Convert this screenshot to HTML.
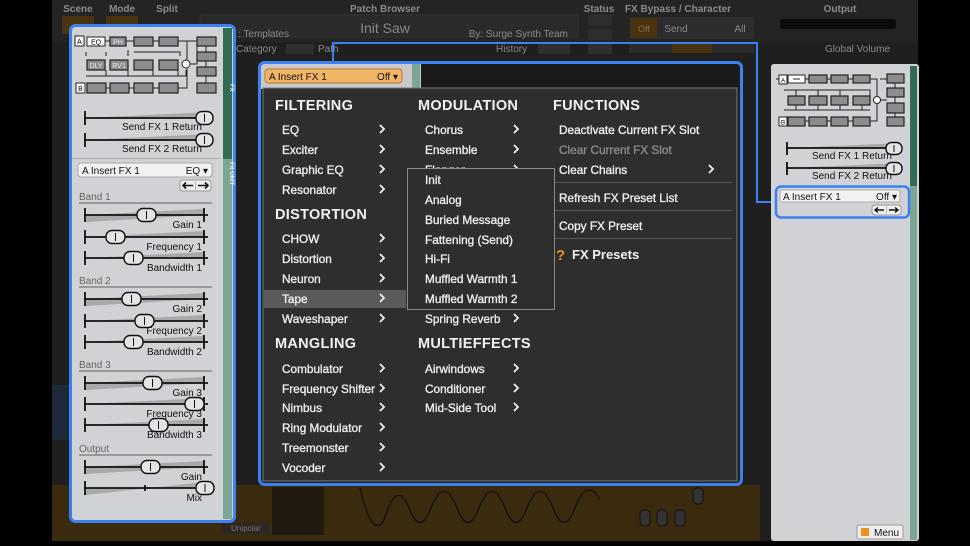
<!DOCTYPE html>
<html><head><meta charset="utf-8"><style>
html,body{margin:0;padding:0;background:#000;}
svg{display:block;font-family:"Liberation Sans",sans-serif;}
.m{fill:#ececec;font-size:11.8px;stroke:#ececec;stroke-width:0.35;}
.h{fill:#f2f2f2;font-size:14.5px;font-weight:bold;letter-spacing:0.3px;}
.l{fill:#111;font-size:10px;}
.b{fill:#666;font-size:10px;}
.d{fill:#8a8a8a;font-size:10px;}
.kn{fill:#e4e4e4;stroke:#111;stroke-width:1.4;}
.tr{stroke:#111;stroke-width:1.8;}
.wg{fill:#a9a9ab;}
.bx{fill:#8c8c8c;stroke:#222;stroke-width:1.2;}
.ch{fill:none;stroke:#eee;stroke-width:1.8;}
</style></head><body>
<svg width="970" height="546" viewBox="0 0 970 546" xmlns="http://www.w3.org/2000/svg">
<rect width="970" height="546" fill="#000"/>
<rect x="52" y="0" width="866" height="541" fill="#1f1f1f" rx="4"/>
<rect x="52" y="0" width="866" height="42" fill="#242424"/>
<text x="78" y="12" class="d" text-anchor="middle" font-weight="bold">Scene</text>
<text x="122" y="12" class="d" text-anchor="middle" font-weight="bold">Mode</text>
<text x="167" y="12" class="d" text-anchor="middle" font-weight="bold">Split</text>
<rect x="62" y="16" width="32" height="18" fill="#4a3410"/>
<rect x="106" y="16" width="32" height="10" fill="#4a3410"/>
<text x="385" y="12" class="d" text-anchor="middle" font-weight="bold">Patch Browser</text>
<rect x="200" y="15" width="378" height="22" fill="#2a2a2a" stroke="#333"/>
<text x="385" y="33" fill="#888" font-size="14" text-anchor="middle">Init Saw</text>
<text x="238" y="37" class="d">: Templates</text>
<text x="568" y="37" class="d" text-anchor="end">By: Surge Synth Team</text>
<text x="236" y="52" class="d" font-size="11">Category</text>
<rect x="286" y="44" width="28" height="10" fill="#2e2e2e"/>
<text x="318" y="52" class="d">Path</text>
<text x="496" y="52" class="d">History</text>
<rect x="538" y="44" width="32" height="10" fill="#2e2e2e"/>
<text x="599" y="12" class="d" text-anchor="middle" font-weight="bold">Status</text>
<rect x="588" y="15" width="24" height="11" fill="#2e2e2e"/><rect x="588" y="29" width="24" height="11" fill="#2e2e2e"/><rect x="588" y="44" width="24" height="10" fill="#2e2e2e"/>
<text x="678" y="12" class="d" text-anchor="middle" font-weight="bold">FX Bypass / Character</text>
<rect x="629" y="17" width="125" height="22" fill="#2c2c2c"/>
<rect x="631" y="18" width="26" height="20" fill="#4a3410"/>
<text x="644" y="32" fill="#7a6a50" font-size="9" text-anchor="middle">Off</text>
<text x="676" y="32" class="d" font-size="9" text-anchor="middle">Send</text>
<text x="740" y="32" class="d" font-size="9" text-anchor="middle">All</text>
<rect x="629" y="44" width="125" height="9" fill="#2c2c2c"/><rect x="672" y="44" width="40" height="9" fill="#4a3410"/>
<text x="840" y="12" class="d" text-anchor="middle" font-weight="bold">Output</text>
<rect x="780" y="19" width="116" height="10" fill="#0c0c0c" rx="2"/>
<text x="890" y="52" class="d" text-anchor="end">Global Volume</text>
<rect x="52" y="485" width="708" height="56" fill="#3a2a0e"/>
<rect x="52" y="385" width="18" height="55" fill="#1c2a3a"/>
<path d="M360 488 Q372 540 384 520 Q396 480 408 505 Q420 540 432 505 Q444 478 456 505 Q468 540 480 505 Q492 478 504 505 Q516 540 528 505 Q540 478 552 505 Q564 540 576 505 Q588 478 600 500" fill="none" stroke="#111" stroke-width="1.3"/>
<rect x="640" y="510" width="10" height="16" rx="4" fill="#333" stroke="#111"/><rect x="657" y="510" width="10" height="16" rx="4" fill="#333" stroke="#111"/><rect x="675" y="510" width="10" height="16" rx="4" fill="#333" stroke="#111"/><rect x="693" y="488" width="10" height="16" rx="4" fill="#333" stroke="#111"/>
<rect x="222" y="522" width="48" height="12" fill="#2e2620"/>
<text x="246" y="531" fill="#777" font-size="8" text-anchor="middle">Unipolar</text>
<rect x="272" y="487" width="52" height="48" fill="#221a10"/>
<rect x="760" y="64" width="10" height="477" fill="#1e1e1e"/>

<path d="M333 62 V43 H757 V202 H776" fill="none" stroke="#3b82f0" stroke-width="2"/>

<!-- LEFT PANEL -->
<rect x="70.5" y="25.5" width="164" height="496" rx="5" fill="#d1d2d6" stroke="#3b82f0" stroke-width="3"/>
<rect x="223" y="28" width="9" height="131" fill="#2f6e55"/>
<rect x="223" y="159" width="9" height="360" fill="#7aa693"/>
<text transform="translate(230,84) rotate(90)" fill="#d8e8e0" font-size="6" font-weight="bold">FX</text>
<text transform="translate(230,162) rotate(90)" fill="#e8f0ec" font-size="6" font-weight="bold">FX UNIT</text>
<g>
<path d="M105 41H110M125 41H134M153 41H159M178 41H187V88H178M187 41H197M128 50V56M134 52H180V56M106 52V56 M128 70V76M106 70V76M153 70V76M178 70V76M86 76H186V70M86 52V56M97 88H159M206 46V52M206 61V67M206 76V83M186 64H197V41" fill="none" stroke="#222" stroke-width="1"/>
<rect x="75" y="36" width="9" height="10" fill="#fff" stroke="#222"/><text x="79.5" y="44" font-size="7" text-anchor="middle">A</text>
<rect x="87" y="37" width="18" height="9" fill="#fff" stroke="#222"/><text x="96" y="44.5" font-size="7" text-anchor="middle">EQ</text>
<rect x="110" y="37" width="16" height="9" class="bx"/><text x="118" y="44.5" font-size="7" fill="#eee" text-anchor="middle">PH</text>
<rect x="134" y="37" width="19" height="9" class="bx"/><rect x="159" y="37" width="19" height="9" class="bx"/>
<rect x="197" y="37" width="19" height="9" class="bx"/><rect x="197" y="52" width="19" height="9" class="bx"/><rect x="197" y="67" width="19" height="9" class="bx"/><rect x="197" y="83" width="19" height="10" class="bx"/>
<rect x="87" y="60" width="18" height="10" class="bx"/><text x="96" y="68" font-size="7" fill="#eee" text-anchor="middle">DLY</text>
<rect x="110" y="60" width="18" height="10" class="bx"/><text x="119" y="68" font-size="7" fill="#eee" text-anchor="middle">RV1</text>
<rect x="134" y="60" width="19" height="10" class="bx"/><rect x="159" y="60" width="19" height="10" class="bx"/>
<circle cx="186" cy="64" r="4" fill="#fff" stroke="#222"/>
<rect x="76" y="83" width="9" height="10" fill="#fff" stroke="#222"/><text x="80.5" y="91" font-size="7" text-anchor="middle">B</text>
<rect x="87" y="83" width="19" height="10" class="bx"/><rect x="110" y="83" width="19" height="10" class="bx"/><rect x="134" y="83" width="19" height="10" class="bx"/><rect x="159" y="83" width="19" height="10" class="bx"/>
</g>
<polygon points="85,118 210,112 210,118" class="wg"/><line x1="84" y1="118" x2="210" y2="118" class="tr"/><line x1="85" y1="111" x2="85" y2="125" class="tr"/>
<rect x="196" y="111.5" width="17" height="13" rx="6" class="kn"/><line x1="204.5" y1="114" x2="204.5" y2="122" stroke="#111"/>
<text x="202" y="130" class="l" text-anchor="end">Send FX 1 Return</text>
<polygon points="85,140 210,134 210,140" class="wg"/><line x1="84" y1="140" x2="210" y2="140" class="tr"/><line x1="85" y1="133" x2="85" y2="147" class="tr"/>
<rect x="196" y="133.5" width="17" height="13" rx="6" class="kn"/><line x1="204.5" y1="136" x2="204.5" y2="144" stroke="#111"/>
<text x="202" y="152" class="l" text-anchor="end">Send FX 2 Return</text>
<line x1="72" y1="158.5" x2="220" y2="158.5" stroke="#aaa"/>
<rect x="78" y="163" width="134" height="14" rx="3" fill="#f2f2f2" stroke="#aaa"/>
<text x="82" y="174" class="l">A Insert FX 1</text><text x="208" y="174" class="l" text-anchor="end">EQ ▾</text>
<rect x="180" y="180" width="31" height="11" rx="3" fill="#eee" stroke="#999"/>
<line x1="195.5" y1="181" x2="195.5" y2="190" stroke="#bbb"/>
<path d="M183 185.5H193M186 182.5L183 185.5L186 188.5M198 185.5H208M205 182.5L208 185.5L205 188.5" fill="none" stroke="#111" stroke-width="1.6"/>
<text x="79" y="200" class="b">Band 1</text><line x1="79" y1="203" x2="212" y2="203" stroke="#888" stroke-width="1.5"/>
<text x="79" y="284" class="b">Band 2</text><line x1="79" y1="287" x2="212" y2="287" stroke="#888" stroke-width="1.5"/>
<text x="79" y="368" class="b">Band 3</text><line x1="79" y1="371" x2="212" y2="371" stroke="#888" stroke-width="1.5"/>
<text x="79" y="452" class="b">Output</text><line x1="79" y1="455" x2="212" y2="455" stroke="#888" stroke-width="1.5"/>
<g>
<polygon points="86,222 86,215 205,209 205,215" class="wg"/><line x1="84" y1="215" x2="208" y2="215" class="tr"/><line x1="85" y1="208" x2="85" y2="222" class="tr"/><line x1="204" y1="208" x2="204" y2="222" class="tr"/>
<rect x="137" y="208.5" width="19" height="13" rx="6" class="kn"/><line x1="146.5" y1="211" x2="146.5" y2="219" stroke="#111"/><text x="202" y="228" class="l" text-anchor="end">Gain 1</text>
<polygon points="86,237 205,231 205,237" class="wg"/><line x1="84" y1="237" x2="208" y2="237" class="tr"/><line x1="85" y1="230" x2="85" y2="244" class="tr"/><line x1="204" y1="230" x2="204" y2="244" class="tr"/>
<rect x="106" y="230.5" width="19" height="13" rx="6" class="kn"/><line x1="115.5" y1="233" x2="115.5" y2="241" stroke="#111"/><text x="202" y="250" class="l" text-anchor="end">Frequency 1</text>
<polygon points="86,258 205,252 205,258" class="wg"/><line x1="84" y1="258" x2="208" y2="258" class="tr"/><line x1="85" y1="251" x2="85" y2="265" class="tr"/><line x1="204" y1="251" x2="204" y2="265" class="tr"/>
<rect x="124" y="251.5" width="19" height="13" rx="6" class="kn"/><line x1="133.5" y1="254" x2="133.5" y2="262" stroke="#111"/><text x="202" y="271" class="l" text-anchor="end">Bandwidth 1</text>
<polygon points="86,306 86,299 205,293 205,299" class="wg"/><line x1="84" y1="299" x2="208" y2="299" class="tr"/><line x1="85" y1="292" x2="85" y2="306" class="tr"/><line x1="204" y1="292" x2="204" y2="306" class="tr"/>
<rect x="122" y="292.5" width="19" height="13" rx="6" class="kn"/><line x1="131.5" y1="295" x2="131.5" y2="303" stroke="#111"/><text x="202" y="312" class="l" text-anchor="end">Gain 2</text>
<polygon points="86,321 205,315 205,321" class="wg"/><line x1="84" y1="321" x2="208" y2="321" class="tr"/><line x1="85" y1="314" x2="85" y2="328" class="tr"/><line x1="204" y1="314" x2="204" y2="328" class="tr"/>
<rect x="135" y="314.5" width="19" height="13" rx="6" class="kn"/><line x1="144.5" y1="317" x2="144.5" y2="325" stroke="#111"/><text x="202" y="334" class="l" text-anchor="end">Frequency 2</text>
<polygon points="86,342 205,336 205,342" class="wg"/><line x1="84" y1="342" x2="208" y2="342" class="tr"/><line x1="85" y1="335" x2="85" y2="349" class="tr"/><line x1="204" y1="335" x2="204" y2="349" class="tr"/>
<rect x="124" y="335.5" width="19" height="13" rx="6" class="kn"/><line x1="133.5" y1="338" x2="133.5" y2="346" stroke="#111"/><text x="202" y="355" class="l" text-anchor="end">Bandwidth 2</text>
<polygon points="86,390 86,383 205,377 205,383" class="wg"/><line x1="84" y1="383" x2="208" y2="383" class="tr"/><line x1="85" y1="376" x2="85" y2="390" class="tr"/><line x1="204" y1="376" x2="204" y2="390" class="tr"/>
<rect x="143" y="376.5" width="19" height="13" rx="6" class="kn"/><line x1="152.5" y1="379" x2="152.5" y2="387" stroke="#111"/><text x="202" y="396" class="l" text-anchor="end">Gain 3</text>
<polygon points="86,404 205,398 205,404" class="wg"/><line x1="84" y1="404" x2="208" y2="404" class="tr"/><line x1="85" y1="397" x2="85" y2="411" class="tr"/><line x1="204" y1="397" x2="204" y2="411" class="tr"/>
<rect x="185" y="397.5" width="19" height="13" rx="6" class="kn"/><line x1="194.5" y1="400" x2="194.5" y2="408" stroke="#111"/><text x="202" y="417" class="l" text-anchor="end">Frequency 3</text>
<polygon points="86,425 205,419 205,425" class="wg"/><line x1="84" y1="425" x2="208" y2="425" class="tr"/><line x1="85" y1="418" x2="85" y2="432" class="tr"/><line x1="204" y1="418" x2="204" y2="432" class="tr"/>
<rect x="149" y="418.5" width="19" height="13" rx="6" class="kn"/><line x1="158.5" y1="421" x2="158.5" y2="429" stroke="#111"/><text x="202" y="438" class="l" text-anchor="end">Bandwidth 3</text>
<polygon points="86,474 86,467 205,461 205,467" class="wg"/><line x1="84" y1="467" x2="208" y2="467" class="tr"/><line x1="85" y1="460" x2="85" y2="474" class="tr"/><line x1="204" y1="460" x2="204" y2="474" class="tr"/>
<rect x="141" y="460.5" width="19" height="13" rx="6" class="kn"/><line x1="150.5" y1="463" x2="150.5" y2="471" stroke="#111"/><text x="202" y="480" class="l" text-anchor="end">Gain</text>
<polygon points="86,495 205,482 205,488 86,488" class="wg"/><line x1="84" y1="488" x2="208" y2="488" class="tr"/><line x1="85" y1="481" x2="85" y2="495" class="tr"/><line x1="145" y1="485" x2="145" y2="491" class="tr"/>
<rect x="196" y="481.5" width="18" height="13" rx="6" class="kn"/><line x1="205" y1="484" x2="205" y2="492" stroke="#111"/><text x="202" y="501" class="l" text-anchor="end">Mix</text>
</g>

<!-- RIGHT PANEL -->
<rect x="771" y="64" width="148" height="477" rx="3" fill="#d1d2d6"/>
<rect x="910" y="66" width="7" height="120" fill="#2f6e55"/>
<rect x="910" y="186" width="7" height="354" fill="#7aa693"/>
<g>
<path d="M776 79H788M805 79H809M827 79H831M848 79H853M870 79H877V121H870M877 79V100H887M880 79H887M848 121H853M827 121H831M805 121H809M787 121H788M784 90H870V96M784 110H870M796 90V96M818 90V96M840 90V96M796 105V110M818 105V110M840 105V110M862 105V110M895 83V88M895 97V103M895 113V117" fill="none" stroke="#222" stroke-width="1"/>
<rect x="779" y="75" width="8" height="9" fill="#fff" stroke="#222"/><text x="783" y="82.5" font-size="6.5" text-anchor="middle">A</text>
<rect x="788" y="75" width="17" height="8" fill="#fff" stroke="#222"/><line x1="793" y1="79" x2="800" y2="79" stroke="#222"/>
<rect x="809" y="75" width="18" height="8" class="bx"/><rect x="831" y="75" width="17" height="8" class="bx"/><rect x="853" y="75" width="17" height="8" class="bx"/>
<rect x="887" y="74" width="17" height="9" class="bx"/><rect x="887" y="88" width="17" height="9" class="bx"/><rect x="887" y="103" width="17" height="10" class="bx"/><rect x="887" y="117" width="17" height="9" class="bx"/>
<rect x="788" y="96" width="17" height="9" class="bx"/><rect x="809" y="96" width="18" height="9" class="bx"/><rect x="831" y="96" width="17" height="9" class="bx"/><rect x="853" y="96" width="17" height="9" class="bx"/>
<circle cx="877" cy="100" r="3.5" fill="#fff" stroke="#222"/>
<rect x="779" y="117" width="8" height="9" fill="#fff" stroke="#222"/><text x="783" y="124.5" font-size="6.5" text-anchor="middle">B</text>
<rect x="788" y="117" width="17" height="9" class="bx"/><rect x="809" y="117" width="18" height="9" class="bx"/><rect x="831" y="117" width="17" height="9" class="bx"/><rect x="853" y="117" width="17" height="9" class="bx"/>
</g>
<polygon points="788,148 900,143 900,148" class="wg"/><line x1="786" y1="148" x2="900" y2="148" class="tr"/><line x1="787" y1="142" x2="787" y2="155" class="tr"/>
<rect x="886" y="142.5" width="16" height="12" rx="5.5" class="kn"/><line x1="894" y1="145" x2="894" y2="152" stroke="#111"/>
<text x="892" y="159" class="l" font-size="9" text-anchor="end">Send FX 1 Return</text>
<polygon points="788,168 900,163 900,168" class="wg"/><line x1="786" y1="168" x2="900" y2="168" class="tr"/><line x1="787" y1="162" x2="787" y2="175" class="tr"/>
<rect x="886" y="162.5" width="16" height="12" rx="5.5" class="kn"/><line x1="894" y1="165" x2="894" y2="172" stroke="#111"/>
<text x="892" y="179" class="l" font-size="9" text-anchor="end">Send FX 2 Return</text>
<rect x="776" y="186.5" width="133" height="31" rx="5" fill="none" stroke="#3b82f0" stroke-width="2.5"/>
<rect x="780" y="190" width="120" height="12" rx="2" fill="#f2f2f2" stroke="#aaa"/>
<text x="783" y="200" class="l" font-size="9">A Insert FX 1</text><text x="897" y="200" class="l" font-size="9" text-anchor="end">Off ▾</text>
<rect x="872" y="205" width="29" height="10" rx="3" fill="#eee" stroke="#999"/>
<line x1="886.5" y1="206" x2="886.5" y2="214" stroke="#bbb"/>
<path d="M875 210H884M878 207.5L875 210L878 212.5M889 210H898M895 207.5L898 210L895 212.5" fill="none" stroke="#111" stroke-width="1.4"/>
<rect x="857" y="525" width="46" height="14" rx="2" fill="#eee" stroke="#999"/>
<rect x="861" y="528" width="8" height="8" fill="#f0901e"/>
<text x="874" y="536" class="l" font-size="10">Menu</text>

<!-- CENTER POPUP -->
<rect x="421" y="63" width="320" height="26" fill="#1b1b1b"/>
<rect x="261" y="63" width="160" height="26" fill="#c9c9cd"/>
<rect x="412" y="63" width="8" height="26" fill="#7aa693"/>
<rect x="265" y="69" width="137" height="14" rx="3" fill="#f2b565" stroke="#b07d30"/>
<text x="269" y="80" class="l">A Insert FX 1</text><text x="398" y="80" class="l" text-anchor="end">Off ▾</text>
<rect x="263" y="88" width="474" height="393" fill="#2e2e2e" stroke="#7a7a7a"/>
<rect x="259.5" y="62.5" width="482" height="422" rx="5" fill="none" stroke="#3b82f0" stroke-width="3"/>
<rect x="264" y="290" width="142" height="18" fill="#5a5a5a"/>
<text x="275" y="110" class="h">FILTERING</text>
<text x="282" y="134" class="m">EQ</text><text x="282" y="154" class="m">Exciter</text><text x="282" y="174" class="m">Graphic EQ</text><text x="282" y="194" class="m">Resonator</text>
<text x="275" y="219" class="h">DISTORTION</text>
<text x="282" y="243" class="m">CHOW</text><text x="282" y="263" class="m">Distortion</text><text x="282" y="283" class="m">Neuron</text><text x="282" y="303" class="m">Tape</text><text x="282" y="323" class="m">Waveshaper</text>
<text x="275" y="348" class="h">MANGLING</text>
<text x="282" y="373" class="m">Combulator</text><text x="282" y="393" class="m">Frequency Shifter</text><text x="282" y="412" class="m">Nimbus</text><text x="282" y="432" class="m">Ring Modulator</text><text x="282" y="452" class="m">Treemonster</text><text x="282" y="472" class="m">Vocoder</text>
<g class="ch">
<path d="M380 125l4 4-4 4M380 145l4 4-4 4M380 165l4 4-4 4M380 185l4 4-4 4M380 234l4 4-4 4M380 254l4 4-4 4M380 274l4 4-4 4M380 294l4 4-4 4M380 314l4 4-4 4M380 364l4 4-4 4M380 384l4 4-4 4M380 403l4 4-4 4M380 423l4 4-4 4M380 443l4 4-4 4M380 463l4 4-4 4"/>
<path d="M514 125l4 4-4 4M514 145l4 4-4 4M514 165l4 4-4 4M514 314l4 4-4 4M514 364l4 4-4 4M514 384l4 4-4 4M514 403l4 4-4 4M709 165l4 4-4 4"/>
</g>
<text x="418" y="110" class="h">MODULATION</text>
<text x="425" y="134" class="m">Chorus</text><text x="425" y="154" class="m">Ensemble</text><text x="425" y="174" class="m">Flanger</text>
<text x="425" y="323" class="m">Spring Reverb</text>
<text x="418" y="348" class="h">MULTIEFFECTS</text>
<text x="425" y="373" class="m">Airwindows</text><text x="425" y="393" class="m">Conditioner</text><text x="425" y="412" class="m">Mid-Side Tool</text>
<text x="553" y="110" class="h">FUNCTIONS</text>
<text x="559" y="134" class="m">Deactivate Current FX Slot</text>
<text x="559" y="154" class="m" style="fill:#8a8a8a;stroke:#8a8a8a">Clear Current FX Slot</text>
<text x="559" y="174" class="m">Clear Chains</text>
<line x1="552" y1="182.5" x2="732" y2="182.5" stroke="#555"/>
<text x="559" y="202" class="m">Refresh FX Preset List</text>
<line x1="552" y1="210.5" x2="732" y2="210.5" stroke="#555"/>
<text x="559" y="230" class="m">Copy FX Preset</text>
<line x1="552" y1="238.5" x2="732" y2="238.5" stroke="#555"/>
<text x="556" y="260" fill="#f0901e" font-size="15" font-weight="bold">?</text>
<text x="572" y="259" fill="#f2f2f2" font-size="13" font-weight="bold">FX Presets</text>
<rect x="407.5" y="168.5" width="147" height="141" fill="#2e2e2e" stroke="#8a8a8a"/>
<text x="425" y="184" class="m">Init</text><text x="425" y="204" class="m">Analog</text><text x="425" y="224" class="m">Buried Message</text><text x="425" y="244" class="m">Fattening (Send)</text><text x="425" y="263" class="m">Hi-Fi</text><text x="425" y="283" class="m">Muffled Warmth 1</text><text x="425" y="303" class="m">Muffled Warmth 2</text>
</svg>
</body></html>
